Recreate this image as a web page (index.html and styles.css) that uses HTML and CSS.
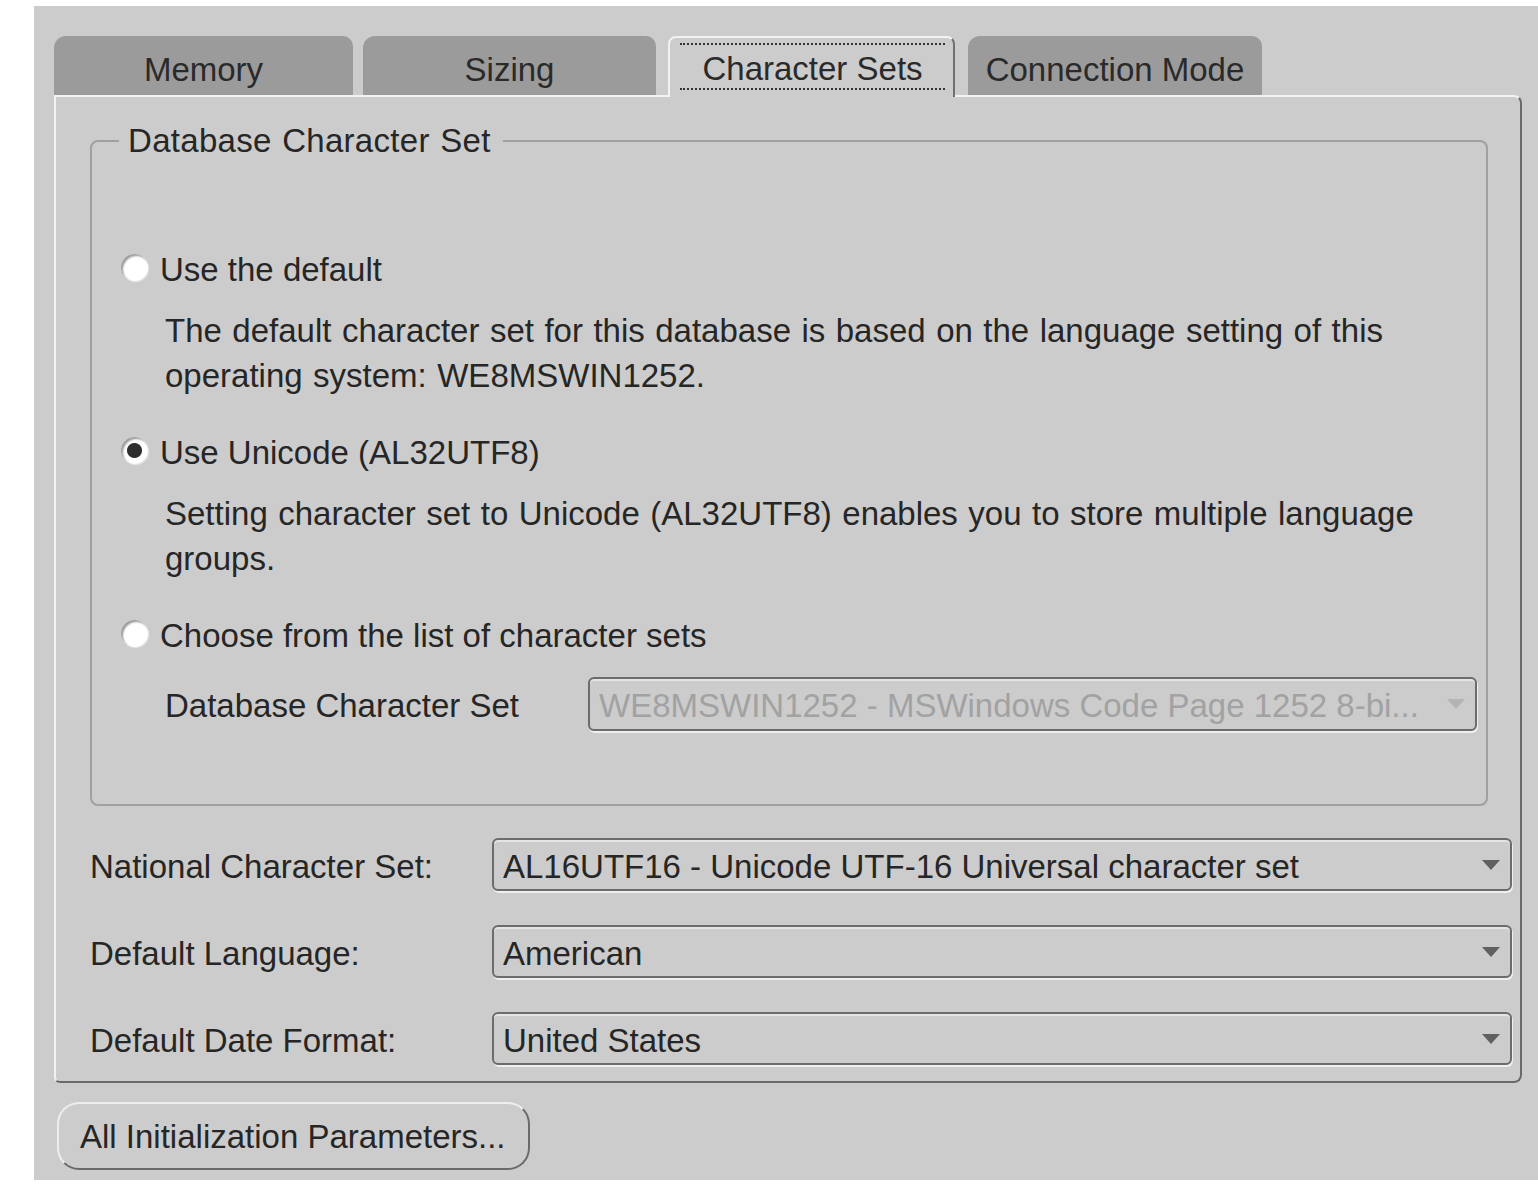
FILE: index.html
```html
<!DOCTYPE html>
<html lang="en">
<head>
    <meta charset="UTF-8">
    <meta name="viewport" content="width=device-width, initial-scale=1.0">
    <title>Initialization Parameters</title>
    <link rel="stylesheet" href="styles.css">
</head>
<body>
    <div class="dialog">
        <div class="tabs">
            <div class="tab tab-memory">Memory</div>
            <div class="tab tab-sizing">Sizing</div>
            <div class="tab tab-charsets active"><span class="focus">Character Sets</span></div>
            <div class="tab tab-connection">Connection Mode</div>
        </div>

        <div class="panel">
            <fieldset class="group">
                <legend>Database Character Set</legend>

                <label class="option">
                    <input type="radio" name="charset" class="radio">
                    <span>Use the default</span>
                </label>
                <p class="desc">The default character set for this database is based on the language setting of this<br>operating system: WE8MSWIN1252.</p>

                <label class="option">
                    <input type="radio" name="charset" class="radio" checked>
                    <span>Use Unicode (AL32UTF8)</span>
                </label>
                <p class="desc">Setting character set to Unicode (AL32UTF8) enables you to store multiple language<br>groups.</p>

                <label class="option">
                    <input type="radio" name="charset" class="radio">
                    <span>Choose from the list of character sets</span>
                </label>
                <div class="charset-row">
                    <span class="charset-label">Database Character Set</span>
                    <div class="combo disabled">
                        <span class="combo-text">WE8MSWIN1252 - MSWindows Code Page 1252 8-bi...</span>
                        <span class="arrow"></span>
                    </div>
                </div>
            </fieldset>

            <div class="settings">
                <span class="field-label">National Character Set:</span>
                <div class="combo">
                    <span class="combo-text">AL16UTF16 - Unicode UTF-16 Universal character set</span>
                    <span class="arrow"></span>
                </div>

                <span class="field-label">Default Language:</span>
                <div class="combo">
                    <span class="combo-text">American</span>
                    <span class="arrow"></span>
                </div>

                <span class="field-label">Default Date Format:</span>
                <div class="combo">
                    <span class="combo-text">United States</span>
                    <span class="arrow"></span>
                </div>
            </div>
        </div>

        <button class="params-btn">All Initialization Parameters...</button>
    </div>
</body>
</html>
```

FILE: styles.css
```css
body {
    margin: 0;
    background-color: #ffffff;
    font-family: 'Liberation Sans', Arial, sans-serif;
    font-size: 33px;
    color: #262626;
}

.dialog {
    margin: 6px 0 0 34px;
    height: 1174px;
    padding: 30px 0 0 20px;
    box-sizing: border-box;
    background-color: #cccccc;
}

/* tab strip */
.tabs {
    display: flex;
    align-items: flex-end;
    height: 59px;
}

.tab {
    height: 59px;
    box-sizing: border-box;
    padding-top: 14px;
    text-align: center;
    line-height: 40px;
    background-color: #9b9b9b;
    border-radius: 12px 10px 0 0;
    color: #2a2a2a;
}

.tab-memory {
    width: 299px;
}

.tab-sizing {
    width: 293px;
    margin-left: 10px;
}

.tab-charsets {
    width: 287px;
    margin-left: 12px;
}

.tab-connection {
    width: 294px;
    margin-left: 13px;
}

.tab.active {
    position: relative;
    z-index: 1;
    height: 61px;
    margin-bottom: -2px;
    padding-top: 5px;
    background-color: #cccccc;
    border-top: 2px solid #f2f2f2;
    border-left: 2px solid #f2f2f2;
    border-right: 2px solid #707070;
    border-radius: 8px 8px 0 0;
}

.focus {
    display: block;
    margin: 0 8px 0 10px;
    padding-top: 5px;
    line-height: 38px;
    border-top: 2px dotted #333333;
    border-bottom: 2px dotted #333333;
}

/* tab body */
.panel {
    width: 1468px;
    height: 988px;
    box-sizing: border-box;
    padding: 21px 8px 0 34px;
    border: 2px solid;
    border-color: #f2f2f2 #6a6a6a #6a6a6a #f2f2f2;
    border-radius: 0 8px 8px 6px;
}

.group {
    margin: 0 24px 0 0;
    padding: 84px 9px 73px 29px;
    min-width: 0;
    border: 2px solid #a0a0a0;
    border-radius: 8px;
}

.group legend {
    margin-left: -2px;
    padding: 0 12px 0 9px;
    line-height: 45px;
    letter-spacing: 0.3px;
    word-spacing: 1px;
}

.option {
    display: flex;
    align-items: center;
    gap: 12px;
    height: 45px;
}

.option + .desc {
    margin-top: 16px;
}

.desc + .option {
    margin-top: 32px;
}

.radio {
    appearance: none;
    width: 27px;
    height: 27px;
    margin: 0 0 5px 0;
    border-radius: 50%;
    background-color: #ffffff;
    box-shadow: inset 2px 2px 2px #9a9a9a, 1px 1px 1px #e8e8e8;
}

.radio:checked {
    background: radial-gradient(circle, #2e2e2e 0 7px, #ffffff 8px);
}

.desc {
    margin: 0 0 0 44px;
    line-height: 45px;
    word-spacing: 1.3px;
}

.charset-row {
    display: flex;
    align-items: center;
    margin: 19px 0 0 44px;
}

.charset-label {
    width: 423px;
    flex-shrink: 0;
    padding-top: 4px;
}

.charset-row .combo {
    flex: 1;
    height: 54px;
}

/* combo boxes */
.combo {
    display: flex;
    align-items: center;
    height: 53px;
    box-sizing: border-box;
    padding: 0 8px 0 9px;
    border: 2px solid #6c6c6c;
    border-radius: 6px;
    box-shadow: 1px 2px 0 #efefef, inset 0 2px 0 #e4e4e4;
    overflow: hidden;
}

.combo-text {
    flex: 1;
    padding-top: 4px;
    white-space: nowrap;
    overflow: hidden;
}

.arrow {
    width: 0;
    height: 0;
    margin-right: 2px;
    border-top: 10px solid #606060;
    border-left: 9px solid transparent;
    border-right: 9px solid transparent;
}

.combo.disabled {
    color: #a2a2a2;
}

.combo.disabled .arrow {
    border-top-color: #b4b4b4;
}

.settings {
    display: grid;
    grid-template-columns: 402px 1fr;
    row-gap: 34px;
    align-items: center;
    margin-top: 32px;
}

.field-label {
    padding-top: 4px;
    white-space: nowrap;
}

/* bottom button */
.params-btn {
    display: block;
    width: 473px;
    height: 68px;
    margin: 19px 0 0 3px;
    padding: 2px 0 0 21px;
    text-align: left;
    font-family: inherit;
    font-size: 33px;
    color: #262626;
    background-color: #cccccc;
    border: 2px solid;
    border-color: #eeeeee #6a6a6a #6a6a6a #eeeeee;
    border-radius: 22px;
}
```
